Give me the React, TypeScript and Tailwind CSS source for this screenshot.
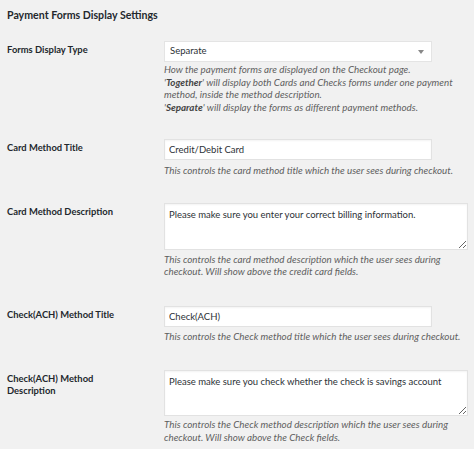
import React from "react";

const font = { fontFamily: 'Lato, "Open Sans", sans-serif' };

const Row = ({
  label,
  className,
  children,
}: {
  label: React.ReactNode;
  className?: string;
  children: React.ReactNode;
}) => (
  <div className={`flex ${className ?? ""}`}>
    <div className="w-[157px] shrink-0 pt-[3px] pr-[14px] text-[9.4px] font-bold leading-[12px] text-[#23282d]">
      {label}
    </div>
    <div className="flex-1">{children}</div>
  </div>
);

const Help = ({ children, className }: { children: React.ReactNode; className?: string }) => (
  <p className={`text-[9.8px] italic leading-[12.5px] text-[#5f5f5f] ${className ?? ""}`}>{children}</p>
);

const inputCls =
  "block w-[268px] h-[21px] bg-white border border-[#e2e2e2] shadow-[inset_0_1px_2px_rgba(0,0,0,0.05)] px-[4px] text-[9.5px] text-[#2c3136] outline-none";

const areaCls =
  "block w-[304px] bg-white border border-[#e2e2e2] shadow-[inset_0_1px_2px_rgba(0,0,0,0.05)] px-[4px] pt-[4px] text-[9.5px] leading-[13px] text-[#2c3136] outline-none";

export default function App() {
  return (
    <div className="w-[474px] h-[451px] bg-white overflow-hidden" style={font}>
      <div className="h-[449px] bg-[#f1f1f1] px-[7px] pt-[6px]">
        <h2 className="text-[10.6px] font-bold leading-[18px] text-[#23282d]">
          Payment Forms Display Settings
        </h2>

        <Row label="Forms Display Type" className="mt-[17px]">
          <div className="relative flex h-[21px] w-[268px] items-center bg-white border border-[#e4e4e4] px-[5px] text-[9.5px] text-[#2c3136]">
            Separate
            <span className="absolute right-[7px] top-[8px] h-0 w-0 border-x-[3px] border-t-[4px] border-x-transparent border-t-[#888]" />
          </div>
          <Help className="mt-[1px]">
            How the payment forms are displayed on the Checkout page.
            <br />'<b className="font-bold text-[#444]">Together</b>' will display both Cards and Checks forms under one payment
            method, inside the method description.
            <br />'<b className="font-bold text-[#444]">Separate</b>' will display the forms as different payment methods.
          </Help>
        </Row>

        <Row label="Card Method Title" className="mt-[26px]">
          <input className={inputCls} defaultValue="Credit/Debit Card" readOnly />
          <Help className="mt-[4px]">This controls the card method title which the user sees during checkout.</Help>
        </Row>

        <Row label="Card Method Description" className="mt-[26px]">
          <textarea
            className={`${areaCls} h-[47px]`}
            defaultValue="Please make sure you enter your correct billing information."
            readOnly
          />
          <Help className="mt-[3px] w-[290px]">
            This controls the card method description which the user sees during checkout. Will show above the credit card
            fields.
          </Help>
        </Row>

        <Row label="Check(ACH) Method Title" className="mt-[28px]">
          <input className={inputCls} defaultValue="Check(ACH)" readOnly />
          <Help className="mt-[3px]">This controls the Check method title which the user sees during checkout.</Help>
        </Row>

        <Row label={<>Check(ACH) Method<br />Description</>} className="mt-[28px]">
          <textarea
            className={`${areaCls} h-[46px]`}
            defaultValue="Please make sure you check whether the check is savings account"
            readOnly
          />
          <Help className="mt-[2px] w-[290px]">
            This controls the Check method description which the user sees during checkout. Will show above the Check
            fields.
          </Help>
        </Row>
      </div>
    </div>
  );
}
